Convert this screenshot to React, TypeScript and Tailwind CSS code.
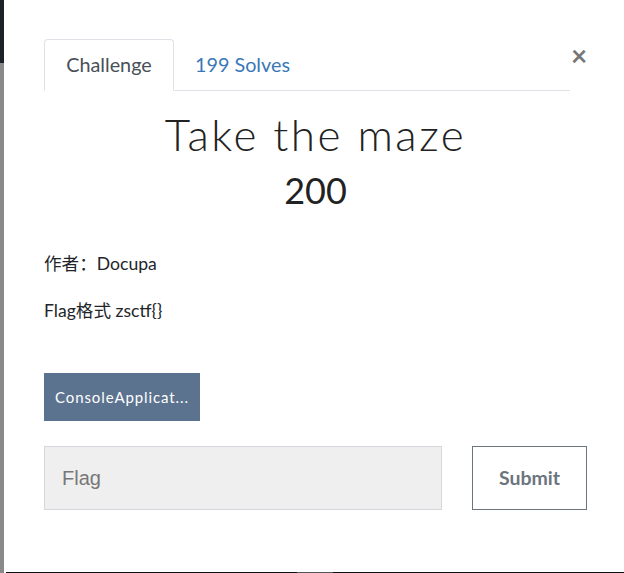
import { useState } from "react";

export default function App() {
  const [flag, setFlag] = useState("");
  const [tab, setTab] = useState<"challenge" | "solves">("challenge");

  return (
    <div className="flex h-[573px] w-[624px] overflow-hidden bg-white font-['Lato','Noto_Sans_CJK_SC',sans-serif] text-[#212529]">
      {/* backdrop edge */}
      <div className="flex w-[4px] flex-col">
        <div className="h-[63px] bg-[#1c2127]" />
        <div className="flex-1 bg-[#8a8a8a]" />
      </div>

      <div className="flex flex-1 flex-col">
        <div className="flex-1 pl-[40px] pr-[37px] pt-[39px]">
          <div className="flex items-start">
            <nav className="mr-[1px] flex flex-1 border-b border-[#dee2e6]">
              <button
                onClick={() => setTab("challenge")}
                className={`-mb-px h-[52px] w-[130px] rounded-t-[4px] border text-[19.8px] ${tab === "challenge" ? "border-[#dee2e6] border-b-white text-[#495057]" : "border-transparent text-[#3a78b8]"}`}
              >
                Challenge
              </button>
              <button
                onClick={() => setTab("solves")}
                className={`-mb-px h-[52px] rounded-t-[4px] border px-[20px] text-[19.8px] ${tab === "solves" ? "border-[#dee2e6] border-b-white text-[#495057]" : "border-transparent text-[#3a78b8]"}`}
              >
                199 Solves
              </button>
            </nav>
            <button className="mt-[1px] w-[16px] text-center text-[28px] font-bold leading-[30px] text-[#777]">
              ×
            </button>
          </div>

          <h2 className="mt-[17px] text-center text-[44px] font-light leading-[52px] tracking-[2.5px] text-[#222]">
            Take the maze
          </h2>
          <h3 className="mt-[8px] text-center text-[36px] leading-[44px] text-[#222]">200</h3>

          <p className="mt-[40px] text-[17.6px] leading-[24px]">作者：Docupa</p>
          <p className="mt-[23px] text-[17.6px] leading-[24px]">Flag格式 zsctf{"{}"}</p>

          <button className="mt-[50px] block h-[48px] w-[156px] bg-[#5c7390] px-[11px] text-left text-[15px] tracking-[0.9px] text-white">
            ConsoleApplicat...
          </button>

          <div className="mt-[25px] flex">
            <input
              value={flag}
              onChange={(e) => setFlag(e.target.value)}
              placeholder="Flag"
              className="h-[64px] w-[398px] border border-[#d4d8dc] bg-[#efefef] pl-[17px] font-['Liberation_Sans',sans-serif] text-[20px] text-[#495057] placeholder-[#777] outline-none"
            />
            <button className="ml-[30px] h-[64px] w-[115px] border border-[#6c757d] bg-white text-[19.5px] font-bold text-[#6c757d]">
              Submit
            </button>
          </div>
        </div>
        <div className="ml-[2px] flex h-[1px]">
          <div className="w-[291px] bg-[#111]" />
          <div className="w-[36px] bg-[#555]" />
          <div className="flex-1 bg-[#111]" />
        </div>
      </div>
    </div>
  );
}
